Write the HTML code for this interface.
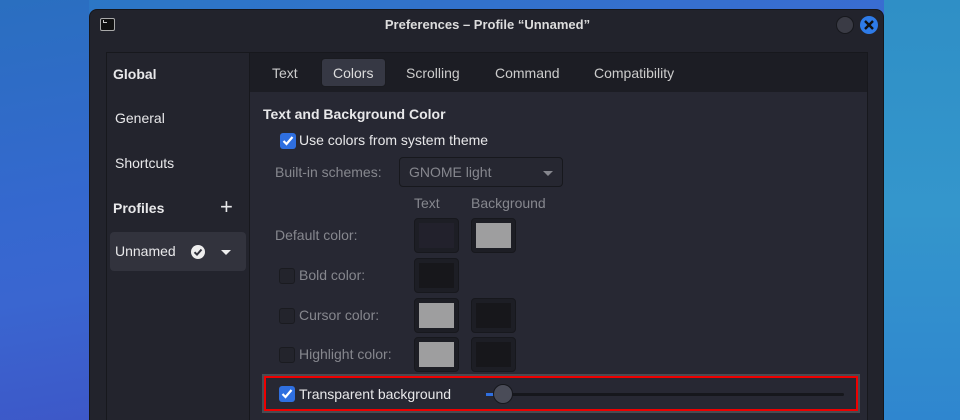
<!DOCTYPE html>
<html><head><meta charset="utf-8"><style>
*{box-sizing:border-box;margin:0;padding:0}
html,body{width:960px;height:420px;overflow:hidden}
body{position:relative;font-family:"Liberation Sans",sans-serif;
background:linear-gradient(160deg,#2a78c4 0%,#3a6cd2 45%,#3a5fcf 70%,#3d55c8 100%);}
.rbg{position:absolute;left:884px;top:0;width:76px;height:420px;background:linear-gradient(180deg,#2f8fc6,#3496cc 50%,#2f86cf)}
.lbg{position:absolute;left:0;top:0;width:89px;height:420px;background:linear-gradient(170deg,#2a6fc0 0%,#3568cf 50%,#3a66d0 70%,#3d58c8 100%)}
.win{position:absolute;left:89px;top:9px;width:795px;height:411px;background:#22232c;border-radius:8px 8px 0 0;border:1px solid #15161b;border-bottom:none;overflow:hidden}
.abs{position:absolute}
.t{color:#e8e8ea;font-size:14px}
.g{color:#86878e;font-size:14px}
.cb{position:absolute;width:16px;height:16px;border-radius:3px;background:#2f6fe0;}
.cb svg{position:absolute;left:1px;top:1px}
.cbo{position:absolute;width:16px;height:16px;border-radius:3px;background:#23242c;border:1px solid #1a1b20}
.sw{position:absolute;width:45px;height:35px;border-radius:4px;background:#1d1e25;border:1px solid #17181d;padding:4px}
.sw div{width:100%;height:100%}
</style></head><body>
<div class="lbg"></div><div class="rbg"></div>
<div class="win">
 <div class="abs" style="left:10px;top:8px;width:15px;height:13px;border:1px solid #aaa;border-radius:2px;background:#111"></div>
 <div class="abs" style="left:13px;top:10px;width:4px;height:3px;border-left:1px solid #ccc;border-bottom:1px solid #ccc"></div>
 <div class="abs t" style="left:0;width:795px;text-align:center;top:7px;font-size:13px;font-weight:bold;color:#ddd">Preferences – Profile “Unnamed”</div>
 <div class="abs" style="left:746px;top:6px;width:18px;height:18px;border-radius:50%;background:#3a3b45;border:1px solid #17181d"></div>
 <div class="abs" style="left:770px;top:6px;width:18px;height:18px;border-radius:50%;background:#2e7be8"><svg width="18" height="18"><path d="M5 5L13 13M13 5L5 13" stroke="#111" stroke-width="2.4"/></svg></div>
 <div class="abs" style="left:16px;top:42px;width:144px;height:369px;background:#23242d;border:1px solid #17181d;border-bottom:none"></div>
 <div class="abs t" style="left:23px;top:56px;font-weight:bold">Global</div>
 <div class="abs t" style="left:25px;top:100px">General</div>
 <div class="abs t" style="left:25px;top:145px">Shortcuts</div>
 <div class="abs t" style="left:23px;top:190px;font-weight:bold">Profiles</div>
 <div class="abs t" style="left:130px;top:184px;font-size:22px;font-weight:300">+</div>
 <div class="abs" style="left:20px;top:222px;width:136px;height:39px;border-radius:4px;background:#32333d"></div>
 <div class="abs t" style="left:25px;top:233px">Unnamed</div>
 <div class="abs" style="left:101px;top:235px;width:14px;height:14px;border-radius:50%;background:#eee"><svg width="14" height="14"><path d="M3.5 7.2L6 9.6L10.5 4.5" stroke="#32333d" stroke-width="2" fill="none"/></svg></div>
 <div class="abs" style="left:131px;top:240px;border-left:5px solid transparent;border-right:5px solid transparent;border-top:5px solid #eee"></div>
 <div class="abs" style="left:159px;top:42px;width:619px;height:369px;background:#272833;border:1px solid #17181d;border-bottom:none"></div>
 <div class="abs" style="left:160px;top:43px;width:617px;height:39px;background:#1c1d24"></div>
 <div class="abs" style="left:231px;top:48px;width:65px;height:29px;border-radius:4px;background:#363844;border:1px solid #1a1b20"></div>
 <div class="abs t" style="left:182px;top:55px;color:#ccc">Text</div>
 <div class="abs t" style="left:243px;top:55px;color:#ddd">Colors</div>
 <div class="abs t" style="left:316px;top:55px;color:#ccc">Scrolling</div>
 <div class="abs t" style="left:405px;top:55px;color:#ccc">Command</div>
 <div class="abs t" style="left:504px;top:55px;color:#ccc">Compatibility</div>
 <div class="abs t" style="left:173px;top:96px;font-weight:bold">Text and Background Color</div>
 <div class="cb" style="left:190px;top:123px"><svg width="14" height="14"><path d="M2.5 7L5.5 10L11.5 3" stroke="#fff" stroke-width="2.2" fill="none"/></svg></div>
 <div class="abs t" style="left:209px;top:122px">Use colors from system theme</div>
 <div class="abs g" style="left:185px;top:154px">Built-in schemes:</div>
 <div class="abs" style="left:309px;top:147px;width:164px;height:30px;border-radius:4px;border:1px solid #17181d;background:#262731"></div>
 <div class="abs g" style="left:319px;top:154px">GNOME light</div>
 <div class="abs" style="left:453px;top:161px;border-left:5px solid transparent;border-right:5px solid transparent;border-top:5px solid #86878e"></div>
 <div class="abs g" style="left:324px;top:185px">Text</div>
 <div class="abs g" style="left:381px;top:185px">Background</div>
 <div class="abs g" style="left:185px;top:217px">Default color:</div>
 <div class="sw" style="left:324px;top:208px"><div style="background:#22212c"></div></div>
 <div class="sw" style="left:381px;top:208px"><div style="background:#9e9e9f"></div></div>
 <div class="cbo" style="left:189px;top:258px"></div>
 <div class="abs g" style="left:209px;top:257px">Bold color:</div>
 <div class="sw" style="left:324px;top:248px"><div style="background:#17171b"></div></div>
 <div class="cbo" style="left:189px;top:298px"></div>
 <div class="abs g" style="left:209px;top:297px">Cursor color:</div>
 <div class="sw" style="left:324px;top:288px"><div style="background:#9e9e9f"></div></div>
 <div class="sw" style="left:381px;top:288px"><div style="background:#17171b"></div></div>
 <div class="cbo" style="left:189px;top:337px"></div>
 <div class="abs g" style="left:209px;top:336px">Highlight color:</div>
 <div class="sw" style="left:324px;top:327px"><div style="background:#9e9e9f"></div></div>
 <div class="sw" style="left:381px;top:327px"><div style="background:#17171b"></div></div>
 <div class="abs" style="left:174px;top:366px;width:594px;height:35px;border:2px solid #e00;outline:2px solid #4a4b52"></div>
 <div class="cb" style="left:189px;top:376px"><svg width="14" height="14"><path d="M2.5 7L5.5 10L11.5 3" stroke="#fff" stroke-width="2.2" fill="none"/></svg></div>
 <div class="abs t" style="left:209px;top:376px">Transparent background</div>
 <div class="abs" style="left:396px;top:383px;width:358px;height:3px;border-radius:2px;background:#16171c"></div>
 <div class="abs" style="left:396px;top:383px;width:10px;height:3px;background:#2f6fe0"></div>
 <div class="abs" style="left:403px;top:374px;width:20px;height:20px;border-radius:50%;background:#4a4c58;border:1px solid #16171c"></div>
</div>
</body></html>
